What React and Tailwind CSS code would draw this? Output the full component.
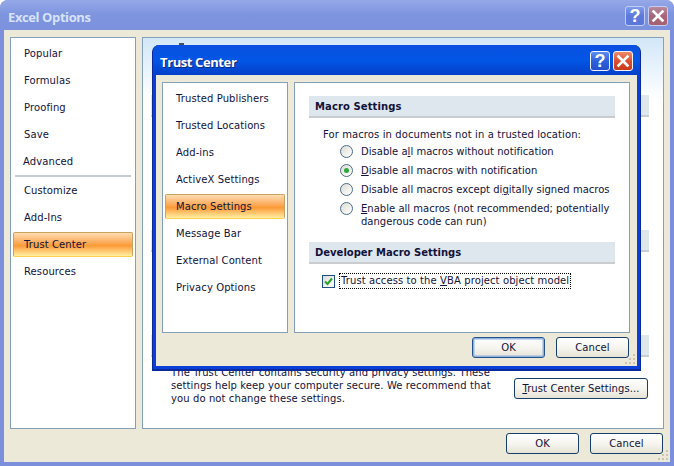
const font = "font-['DejaVu_Sans',sans-serif] text-[10px] tracking-[0.1px] text-[#12123a]";
const titleFont = "font-['Open_Sans',sans-serif] font-bold text-[13px] tracking-[-0.4px] mt-[6px]";

function TitleButton({ kind, active }) {
  const isHelp = kind === "help";
  const cls = isHelp
    ? active
      ? "bg-gradient-to-b from-[#5c8cf0] via-[#2e62dc] to-[#2350c8]"
      : "bg-gradient-to-b from-[#7f9cec] via-[#5c78dc] to-[#5a78d8]"
    : active
      ? "bg-gradient-to-b from-[#ee8a6c] via-[#dc5030] to-[#c83c1c]"
      : "bg-gradient-to-b from-[#b98a9c] via-[#a86478] to-[#a86070]";
  return (
    <div className={`w-5 h-5 rounded-[3px] border flex items-center justify-center ${active ? "border-[#f2f4fc]" : "border-[#c4cef2]"} ${cls}`}>
      {isHelp ? (
        <span className="font-['Liberation_Sans',sans-serif] font-bold text-[18px] leading-none text-white">?</span>
      ) : (
        <svg width="14" height="14" viewBox="0 0 14 14" className="text-white">
          <path d="M2.5 2.5 L11.5 11.5 M11.5 2.5 L2.5 11.5" stroke="currentColor" strokeWidth="2.6" fill="none" strokeLinecap="square" />
        </svg>
      )}
    </div>
  );
}

function Button({ children, primary, className = "" }) {
  return (
    <button
      className={`h-[21px] rounded-[3px] border bg-gradient-to-b from-[#fefefe] via-[#f6f5ef] to-[#e6e3d6] flex items-center justify-center ${font} ${
        primary ? "border-[#24528a] shadow-[inset_0_0_0_1.5px_#8fb2de]" : "border-[#173f6b]"
      } ${className}`}
    >
      {children}
    </button>
  );
}

function Grip() {
  return (
    <svg width="12" height="12" viewBox="0 0 12 12" className="absolute right-[1px] bottom-[1px]">
      <g fill="#c9c5b2">
        <rect x="9" y="1" width="2" height="2" />
        <rect x="5" y="5" width="2" height="2" />
        <rect x="9" y="5" width="2" height="2" />
        <rect x="1" y="9" width="2" height="2" />
        <rect x="5" y="9" width="2" height="2" />
        <rect x="9" y="9" width="2" height="2" />
      </g>
    </svg>
  );
}

function NavItem({ children, selected, tight }) {
  if (selected) {
    return (
      <div className={`h-[25px] my-px flex items-center pl-[10px] rounded-[2px] border border-[#c9a25e] border-b-[#fbd24f] bg-gradient-to-b from-[#fddcb0] via-[#fb9a34] via-55% to-[#fff0a0] ${font}`}>
        {children}
      </div>
    );
  }
  return (
    <div className={`h-[27px] flex items-center ${font} ${tight ? "pl-[10px]" : "pl-[11px]"}`}>
      {children}
    </div>
  );
}

function Radio({ checked, children }) {
  return (
    <div className="flex items-start gap-[8px]">
      <span className="mt-[1px] w-[13px] h-[13px] shrink-0 rounded-full border border-[#4d6c8c] bg-gradient-to-br from-[#dcdcd4] to-white flex items-center justify-center">
        {checked && <span className="w-[5px] h-[5px] rounded-full bg-[#2fa83a]" />}
      </span>
      <span className="leading-[13px] pt-[1px] tracking-[0.02px]">{children}</span>
    </div>
  );
}

function SectionBar({ children, className = "" }) {
  return (
    <div className={`h-[22px] bg-[#dee7ee] border-b-2 border-[#c9cdd0] flex items-center pl-[6px] ${font} font-bold ${className}`}>
      {children}
    </div>
  );
}

function Panel({ className = "", children }) {
  return <div className={`bg-white border border-[#84a0bb] ${className}`}>{children}</div>;
}

function TrustCenter() {
  const items = ["Trusted Publishers", "Trusted Locations", "Add-ins", "ActiveX Settings", "Macro Settings", "Message Bar", "External Content", "Privacy Options"];
  return (
    <div className="absolute left-[152px] top-[45px] w-[489px] h-[326px] flex flex-col rounded-t-[7px] bg-[#0a3fd8] border-b-2 border-r border-l border-[#0a2a9c] overflow-hidden">
      <div className="h-[30px] shrink-0 bg-gradient-to-b from-[#0a50e0] via-[#0256e6] to-[#0340c8] flex items-center pl-[7px] pr-[7px] justify-between">
        <span className={`${titleFont} text-white [text-shadow:1px_1px_0_#0a2a80]`}>Trust Center</span>
        <div className="flex gap-[3px] mt-[2px]">
          <TitleButton kind="help" active />
          <TitleButton kind="close" active />
        </div>
      </div>
      <div className="flex-1 mx-[3px] mb-[3px] bg-[#ece9d8] relative flex flex-col px-[6px] pt-[7px]">
        <div className="flex gap-[6px] h-[251px]">
          <Panel className="w-[126px] pt-[2px] pl-[2px] pr-[2px] flex flex-col">
            {items.map((t) => (
              <NavItem key={t} selected={t === "Macro Settings"}>{t}</NavItem>
            ))}
          </Panel>
          <Panel className="w-[336px] pt-[13px] px-[14px]">
            <SectionBar className="tracking-[-0.5px]">Macro Settings</SectionBar>
            <div className={`pl-[14px] pt-[10px] ${font}`}>
              <div className="leading-[13px]">For macros in documents not in a trusted location:</div>
              <div className="pl-[17px] pt-[3px] flex flex-col gap-[5px]">
                <Radio>Disable a<u>l</u>l macros without notification</Radio>
                <Radio checked><u>D</u>isable all macros with notification</Radio>
                <Radio>Disable all macros except di<u>g</u>itally signed macros</Radio>
                <Radio><u>E</u>nable all macros (not recommended; potentially<br />dangerous code can run)</Radio>
              </div>
            </div>
            <SectionBar className="mt-[14px] tracking-[0px]">Developer Macro Settings</SectionBar>
            <div className={`pl-[13px] pt-[9px] flex items-center gap-[4px] ${font}`}>
              <span className="w-[13px] h-[13px] border border-[#1c5180] bg-gradient-to-br from-[#dcdcd4] to-white flex items-center justify-center">
                <svg width="9" height="9" viewBox="0 0 9 9"><path d="M1 4.5 L3.5 7 L8 1.5" fill="none" stroke="#2aa02a" strokeWidth="2" /></svg>
              </span>
              <span className="border border-dotted border-black px-[1px] leading-[14px]">Trust access to the <u>V</u>BA project object model</span>
            </div>
          </Panel>
        </div>
        <div className="flex justify-end gap-[11px] pr-[2px] pt-[4px]">
          <Button primary className="w-[73px]">OK</Button>
          <Button className="w-[73px]">Cancel</Button>
        </div>
        <Grip />
      </div>
    </div>
  );
}

export default function App() {
  const items = ["Popular", "Formulas", "Proofing", "Save", "Advanced"];
  const items2 = ["Customize", "Add-Ins", "Trust Center", "Resources"];
  return (
    <div className="relative w-[674px] h-[466px] flex flex-col overflow-hidden bg-[#7c8fdc] rounded-t-[8px]">
      <div className="h-[30px] shrink-0 bg-gradient-to-b from-[#95a8e8] via-[#7d94de] to-[#7c92dc] flex items-center justify-between pl-[8px] pr-[6px]">
        <span className={`${titleFont} text-[#d8e2f8]`}>Excel Options</span>
        <div className="flex gap-[3px] mt-[2px]">
          <TitleButton kind="help" />
          <TitleButton kind="close" />
        </div>
      </div>
      <div className="flex-1 mx-[4px] mb-[4px] bg-[#ece9d8] relative flex flex-col px-[6px] pt-[7px]">
        <div className="flex gap-[6px] h-[392px]">
          <Panel className="w-[126px] pt-[2px] px-[2px] flex flex-col">
            {items.map((t) => (
              <NavItem key={t} tight={t === "Advanced"}>{t}</NavItem>
            ))}
            <div className="h-[2px] mx-[2px] bg-[#c5ccd4]" />
            {items2.map((t) => (
              <NavItem key={t} selected={t === "Trust Center"}>{t}</NavItem>
            ))}
          </Panel>
          <Panel className="w-[522px] flex flex-col bg-gradient-to-b from-[#d2e7f8] from-0% to-white to-[16%] pr-[14px] pl-[8px]">
            <div className="h-[57px] relative">
              <svg width="5" height="3" viewBox="0 0 5 3" className="absolute left-[28px] top-[5px]"><rect width="5" height="3" fill="#4a4f5a" /></svg>
            </div>
            <SectionBar />
            <div className="h-[113px]" />
            <SectionBar />
            <div className="h-[83px]" />
            <SectionBar />
            <div className="flex justify-between pt-[10px] pl-[20px] pr-[1px]">
              <p className={`w-[330px] leading-[13px] -mt-[1px] ${font}`}>
                The Trust Center contains security and privacy settings. These<br />settings help keep your computer secure. We recommend that<br />you do not change these settings.
              </p>
              <Button className="w-[134px] mt-[11px]"><span><u>T</u>rust Center Settings...</span></Button>
            </div>
          </Panel>
        </div>
        <div className="flex justify-end gap-[11px] pr-[1px] pt-[4px]">
          <Button className="w-[73px]">OK</Button>
          <Button className="w-[73px]">Cancel</Button>
        </div>
        <Grip />
      </div>
      <TrustCenter />
    </div>
  );
}
